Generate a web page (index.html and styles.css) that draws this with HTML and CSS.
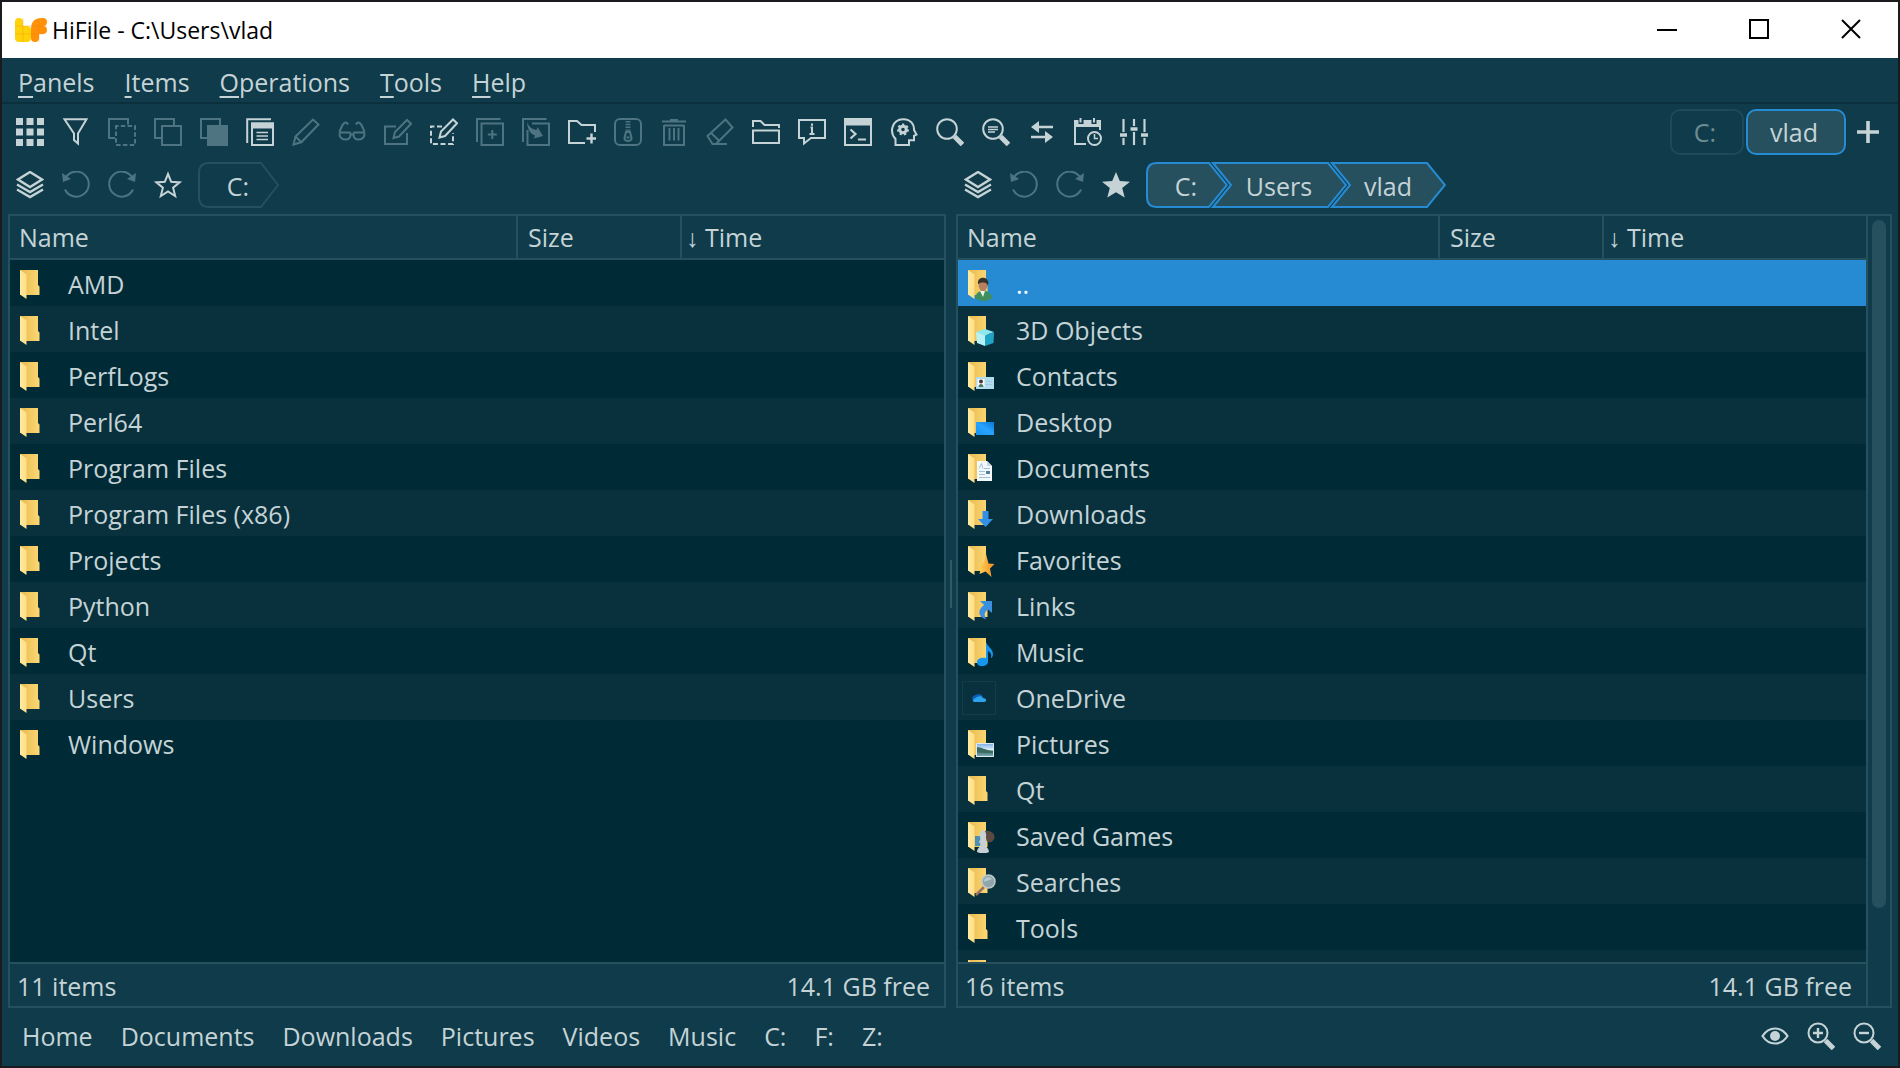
FILE: index.html
```
<!DOCTYPE html>
<html lang="en">
<head>
    <meta charset="UTF-8">
    <meta name="viewport" content="width=device-width, initial-scale=1.0">
    <title>HiFile - C:\Users\vlad</title>
    <link rel="stylesheet" href="styles.css">
</head>
<body>
    <svg class="sprite" aria-hidden="true">
        <defs>
            <linearGradient id="front" x1="0" x2="1"><stop offset="0" stop-color="#ffe9a2"/><stop offset="1" stop-color="#ffdf85"/></linearGradient>
            <linearGradient id="back" x1="0" x2="1"><stop offset="0" stop-color="#e8b950"/><stop offset="1" stop-color="#fcd873"/></linearGradient>
            <linearGradient id="sky" x1="0" y1="0" x2="0" y2="1"><stop offset="0" stop-color="#6fa6e4"/><stop offset=".5" stop-color="#e4f1fb"/><stop offset=".6" stop-color="#3f6d66"/><stop offset="1" stop-color="#8cb9cb"/></linearGradient>
            <linearGradient id="screen" x1="0" y1="1" x2="1" y2="0"><stop offset="0" stop-color="#1594f3"/><stop offset=".5" stop-color="#2aa3ff"/><stop offset="1" stop-color="#0878d8"/></linearGradient>
            <linearGradient id="flame" x1="0" x2="1"><stop offset="0" stop-color="#ffd45c"/><stop offset="1" stop-color="#f28a1c"/></linearGradient>
        </defs>

        <!-- toolbar -->
        <symbol id="i-grid" viewBox="0 0 28 28"><path fill="currentColor" stroke="none" d="M0 0h7v7H0zM10.500 0h7v7h-7zM21 0h7v7h-7zM0 10.500h7v7H0zM10.500 10.500h7v7h-7zM21 10.500h7v7h-7zM0 21h7v7H0zM10.500 21h7v7h-7zM21 21h7v7h-7z"/></symbol>
        <symbol id="i-filter" viewBox="0 0 28 28"><path d="M2.500 1.200h22L16 15.500V25.500l-4-3.500v-6.500z"/></symbol>
        <symbol id="i-unselect" viewBox="0 0 28 28"><path d="M7 20H1V1h19v5.500"/><path d="M8 8h19v19H8z" stroke-dasharray="4.500 2.300" stroke-dashoffset="2"/></symbol>
        <symbol id="i-select" viewBox="0 0 28 28"><path d="M7 20H1V1h19v6M8 8h19v19H8z"/></symbol>
        <symbol id="i-invert" viewBox="0 0 28 28"><path d="M7 20H1V1h19v6"/><path fill="currentColor" d="M8 8h19v19H8z"/></symbol>
        <symbol id="i-windows" viewBox="0 0 28 28"><path d="M1.200 25V1.200H25M6 5.500h21V27H6z"/><path fill="currentColor" stroke="none" d="M5 4.500h23v6H5z"/><path stroke-width="1.500" d="M10.500 14.500H22M10.500 18H22M10.500 21.500H22"/></symbol>
        <symbol id="i-pencil" viewBox="0 0 28 28"><path d="M1.500 26.500l2-8L21 1.500l5.500 5L9.300 24.300zM3.500 18.500l5.800 5.800"/></symbol>
        <symbol id="i-glasses" viewBox="0 0 28 28"><path d="M2 14.500h9.500c1 0 1 .8 1 2 0 3-2 5-5 5s-6-2-6-5zM26 14.500h-9.500c-1 0-1 .8-1 2 0 3 2 5 5 5s6-2 6-5zM1.500 14C3.500 9 5 4 8 4.500c1 .2 1.500 1 2 2M26.500 14c-2-5-3.500-10-6.500-9.500-1 .2-1.500 1-2 2M12 16.500h4"/></symbol>
        <symbol id="i-edit" viewBox="0 0 28 28"><path d="M12 8.500H1V26h22V15M9.500 20l1.500-6L23 2l4 3.800L15 18.500z"/></symbol>
        <symbol id="i-editsel" viewBox="0 0 28 28"><path stroke-dasharray="5 2.600" d="M12 8.500H1V26h22V15"/><path d="M9.500 19.500l1.500-6L23 1.500l4 3.800L15 18z"/></symbol>
        <symbol id="i-copy" viewBox="0 0 28 28"><path d="M1 24V1h23.500M5.500 5.500H27V27H5.500zM16.300 12v9M11.800 16.500h9"/></symbol>
        <symbol id="i-move" viewBox="0 0 28 28"><path d="M1 24V1h23.500M5.500 12v15H27V5.500H10"/><path fill="currentColor" stroke="none" d="M5 4c1.500 4.500 4.500 7 9.500 8l1-3L21 18l-9 2.500 1-3C8 16 5.500 11 5 4z"/></symbol>
        <symbol id="i-newfolder" viewBox="0 0 28 28"><path d="M17 25H1V3h8l4.500 4H27v7"/><path stroke-width="2.400" d="M23.500 15.500v10M18.500 20.500h9.500"/></symbol>
        <symbol id="i-zip" viewBox="0 0 28 28"><rect x="1" y="1" width="26" height="26" rx="5"/><path stroke-dasharray="1.400 1.400" stroke-width="5" d="M14 3v10"/><path d="M12 14h4l1.500 6c.5 4-7.500 4-7 0zM12.500 19.500h3"/></symbol>
        <symbol id="i-trash" viewBox="0 0 28 28"><path d="M2 3.500h24M10 2h8M4 7v20h20V7M4 7.500h20M9.500 10v12.500M14 10v12.500M18.500 10v12.500"/></symbol>
        <symbol id="i-eraser" viewBox="0 0 28 28"><path d="M1.500 18L19.500 1.500l7 8L10 26H6.500zM5 15l8.500 8M8 26h13"/></symbol>
        <symbol id="i-folders" viewBox="0 0 28 28"><path d="M1 9V3h7.500l4 4H27v3M1 12.500h26V25H1z"/></symbol>
        <symbol id="i-info" viewBox="0 0 28 28"><path d="M1 2h26v18H13l-7 5.500V20H1z"/><path d="M12.500 9.500H14V16M11.500 16h5M14 5.500v2.200"/></symbol>
        <symbol id="i-terminal" viewBox="0 0 28 28"><path d="M1 1h26v26H1z"/><path fill="currentColor" stroke="none" d="M0 0h28v7.500H0z"/><path stroke-width="2.200" d="M6.500 11.500l5 4.500-5 4.500M14 21.500h8"/></symbol>
        <symbol id="i-head" viewBox="0 0 28 28"><path d="M5.500 27v-6C-1 14 2 1.500 13 1.200 21 1 24.500 7 24 12l2.500 4.500-2.500 1.300v4.500h-5V27z"/><circle cx="13" cy="11.500" r="3.300" stroke-width="3"/><path stroke-dasharray="2.200 2.200" stroke-width="2" d="M18 11.500a5 5 0 1 1-10 0a5 5 0 1 1 10 0"/></symbol>
        <symbol id="i-search" viewBox="0 0 28 28"><circle cx="11" cy="11" r="9.800"/><path stroke-width="5" d="M18.500 18.500l8 8"/></symbol>
        <symbol id="i-searchtext" viewBox="0 0 28 28"><circle cx="11" cy="11" r="9.800"/><path stroke-width="5" d="M18.500 18.500l8 8"/><path stroke-width="1.500" d="M6 9h10M6 11.500h10M6 14h7"/></symbol>
        <symbol id="i-swap" viewBox="0 0 28 28"><path stroke-width="2.400" d="M8 9h17M3 19h15"/><path fill="currentColor" stroke="none" d="M3 9l8-6v12zM25 19l-8-6v12z"/></symbol>
        <symbol id="i-calendar" viewBox="0 0 28 28"><path d="M12 26H1V3h25v9"/><path fill="currentColor" stroke="none" d="M0 2h27v7H0z"/><path class="cut" d="M7 0v6M20 0v6"/><path stroke-width="2" d="M6.500 0v4.500M20 0v4.500"/><circle cx="20.500" cy="20.500" r="6.500"/><path stroke-width="1.500" d="M20.500 16v4.500H24"/></symbol>
        <symbol id="i-sliders" viewBox="0 0 28 28"><path stroke-width="2.200" d="M3.500 1v13M3.500 20v7M14 1v7M14 14v13M24.500 1v13M24.500 20v7"/><path stroke-width="3.600" d="M0 17h7M10.500 11h7M21 17h7"/></symbol>
        <symbol id="i-plus" viewBox="0 0 28 28"><path stroke-width="3.600" d="M14 3v22M3 14h22"/></symbol>

        <!-- path bar -->
        <symbol id="i-layers" viewBox="0 0 28 28"><path stroke-width="2.400" d="M14 1L26 8.500 14 16 2 8.500zM1 13.500L14 21l13-7.500M1 18.500L14 26l13-7.500"/></symbol>
        <symbol id="i-undo" viewBox="0 0 28 28"><path d="M4 6A12.500 12.500 0 1 1 3 18.500"/><path fill="currentColor" stroke="none" d="M0 2l1 9 8-3z"/></symbol>
        <symbol id="i-redo" viewBox="0 0 28 28"><path d="M24 6A12.500 12.500 0 1 0 25 18.500"/><path fill="currentColor" stroke="none" d="M28 2l-1 9-8-3z"/></symbol>
        <symbol id="i-star" viewBox="0 0 28 28"><path d="M14 3l3.200 7.800 8.300.6-6.400 5.300 2.100 8.300-7.200-4.600L6.800 25l2.100-8.300-6.400-5.300 8.300-.6z"/></symbol>
        <symbol id="i-starfull" viewBox="0 0 28 28"><path fill="currentColor" stroke="none" d="M14 1l3.800 9 10.200.7-7.800 6.400L22.700 26.500 14 21.200 5.300 26.500l2.500-9.400L0 10.700l10.200-.7z"/></symbol>

        <!-- bottom bar -->
        <symbol id="i-eye" viewBox="0 0 28 28"><path stroke-width="2.200" d="M1.500 14C8 4 20 4 26.500 14 20 24 8 24 1.500 14z"/><circle cx="14" cy="14" r="5" fill="currentColor" stroke="none"/></symbol>
        <symbol id="i-zoomin" viewBox="0 0 28 28"><circle cx="11" cy="11" r="9.500"/><path stroke-width="5" d="M18.500 18.500l8 8"/><path stroke-width="2.400" d="M11 6v10M6 11h10"/></symbol>
        <symbol id="i-zoomout" viewBox="0 0 28 28"><circle cx="11" cy="11" r="9.500"/><path stroke-width="5" d="M18.500 18.500l8 8"/><path stroke-width="2.400" d="M6 11h10"/></symbol>

        <!-- file icons -->
        <symbol id="f-folder" viewBox="0 0 34 34"><path fill="url(#back)" d="M6 3h18v15l1.500 1.500V28H6z"/><path fill="url(#front)" d="M6 3l6.500 4.500v24.500L6 27.500z"/></symbol>
        <symbol id="f-user" viewBox="0 0 34 34"><use href="#f-folder"/><path fill="#3f8f5d" d="M13 31c1-5 4-7 8-8 5 1 9 4 9 8-4 4-12 4-17 0z"/><path fill="#eef2ee" d="M18 24l3 6 2-6z"/><ellipse cx="21" cy="18" rx="4.500" ry="6" fill="#b98060"/><path fill="#38332e" d="M16 17c-1-8 10-8 10.500-1l-1 2.500c-.5-3-4-4-9.500-1.500z"/></symbol>
        <symbol id="f-cube" viewBox="0 0 34 34"><use href="#f-folder"/><path fill="#8be7f0" d="M14 19l9-3 9 3-9 3.500z"/><path fill="#b5f3f6" d="M14 19l9 3.500V33l-8-3z"/><path fill="#21a5c6" d="M32 19l-9 3.500V33l8.500-3z"/></symbol>
        <symbol id="f-card" viewBox="0 0 34 34"><use href="#f-folder"/><path fill="#b4dcef" d="M14 18h18v12H14z"/><path fill="#f4f9fb" d="M15.500 20h7v8h-7z"/><path fill="#4b7961" d="M16.500 28c0-4 5-4 5 0z"/><circle cx="19" cy="22.500" r="2" fill="#4b3c31"/><path stroke="#9acbe2" d="M24 22.500h6M24 25.500h6"/></symbol>
        <symbol id="f-desktop" viewBox="0 0 34 34"><use href="#f-folder"/><path fill="url(#screen)" d="M14 17h18v13H14z"/></symbol>
        <symbol id="f-document" viewBox="0 0 34 34"><use href="#f-folder"/><path fill="#f5f8fa" d="M15 10h10l5 5v15H15z"/><path fill="#cdd8de" d="M25 10v5h5z"/><path stroke="#9fc2d8" d="M17 17.500l2.500-5 1.500 5M22 17.500h6M17 20.500h6M17 23.500h6M17 26.500h11"/><path fill="#52809b" d="M24 20h4v3h-4z"/></symbol>
        <symbol id="f-download" viewBox="0 0 34 34"><use href="#f-folder"/><path fill="#3291e6" d="M20.500 14h6v8H31l-7.500 8-7.500-8h4.500z"/></symbol>
        <symbol id="f-favorite" viewBox="0 0 34 34"><use href="#f-folder"/><path fill="url(#flame)" d="M24 11l2.500 9.500 6 .5-4.500 4.500 1.500 8.500-6-5.500-6 2.500 1.500-6-2-4 5-1z"/></symbol>
        <symbol id="f-link" viewBox="0 0 34 34"><use href="#f-folder"/><path fill="#3b90df" d="M18 12h12v12l-4-3.500c-3 2-4 4-3 7l1 3c-8-3-9-9-2-14.500z"/></symbol>
        <symbol id="f-music" viewBox="0 0 34 34"><use href="#f-folder"/><path fill="#1696ee" d="M24 7c1 4 7 7 7 12 0 2-1 4-2 4 1-4-1-6-3-7v10c0 3-2 5-6 5s-5-2-5-4c0-3 4-5 9-4z"/></symbol>
        <symbol id="f-onedrive" viewBox="0 0 34 34"><path fill="none" stroke="#0f3d4c" d="M.5.500h33v33H.5z"/><path fill="#0a5fb4" d="M10 18c0-3 3-4 4-4 2-2 6-1 7 2l-6 4z"/><path fill="#2ba4ed" d="M12 21c-2-1-1-3 1-3.500 3-3 7-3 8-.5 4 0 4 4 1 4z"/></symbol>
        <symbol id="f-picture" viewBox="0 0 34 34"><use href="#f-folder"/><path fill="url(#sky)" d="M14 16h18v14H14z"/><path fill="#3b6a60" d="M15 20c4 0 8 3 16 4v2c-6 0-10 0-16-1z"/><path stroke="#dfe9ee" d="M14.500 16.500h17v13h-17z"/></symbol>
        <symbol id="f-games" viewBox="0 0 34 34"><use href="#f-folder"/><path fill="#4e8fb5" d="M13 17h6v10h-6z"/><path fill="#5b4a42" d="M23 12c5-1 10 2 9.500 7-2 5-5 5-8 3z"/><path fill="#c7d0d4" d="M15 33c0-4 3-4 3.500-8l-1.500-2 1.500-3c-1.500-4-.5-8 2.500-9 3 1 4 5 2.500 9l1.500 3-1.500 2c.5 4 3.500 4 3.500 8-4 2-8 2-12 0z"/></symbol>
        <symbol id="f-search" viewBox="0 0 34 34"><use href="#f-folder"/><path stroke="#9b7360" stroke-width="2.500" d="M14 30l8-8"/><circle cx="26.500" cy="16.500" r="6.500" fill="#8fa6ad" stroke="#bdc8cb" stroke-width="1.500"/><path fill="#b9cacf" d="M22 17c0-5 5-6 8-3z"/></symbol>
    </svg>

    <div class="window">
        <header class="titlebar">
            <svg class="logo" viewBox="0 0 32 24" aria-hidden="true">
                <path class="logo-h" d="M4 4v16h8v-8H4"/>
                <path class="logo-f" d="M20 20v-9q0-7 7-7h1M20 12h8"/>
                <path class="logo-grid" d="M0 8h32M0 16h28M8 0v24M24 0v24"/>
            </svg>
            <h1 class="title">HiFile - C:\Users\vlad</h1>
            <div class="window-buttons">
                <button aria-label="Minimize"><svg viewBox="0 0 20 20"><path d="M0 11h20"/></svg></button>
                <button aria-label="Maximize"><svg viewBox="0 0 20 20"><path d="M1 1h18v18H1z"/></svg></button>
                <button aria-label="Close"><svg viewBox="0 0 20 20"><path d="M1 1l18 18M19 1L1 19"/></svg></button>
            </div>
        </header>

        <nav class="menu">
            <button><u>P</u>anels</button>
            <button><u>I</u>tems</button>
            <button><u>O</u>perations</button>
            <button><u>T</u>ools</button>
            <button><u>H</u>elp</button>
        </nav>

        <div class="toolbar">
            <div class="icons">
                <button class="icon" aria-label="View mode"><svg><use href="#i-grid"/></svg></button>
                <button class="icon" aria-label="Filter"><svg><use href="#i-filter"/></svg></button>
                <button class="icon" aria-label="Unselect" disabled><svg><use href="#i-unselect"/></svg></button>
                <button class="icon" aria-label="Select" disabled><svg><use href="#i-select"/></svg></button>
                <button class="icon" aria-label="Invert selection" disabled><svg><use href="#i-invert"/></svg></button>
                <button class="icon" aria-label="Details"><svg><use href="#i-windows"/></svg></button>
                <button class="icon" aria-label="Edit" disabled><svg><use href="#i-pencil"/></svg></button>
                <button class="icon" aria-label="View" disabled><svg><use href="#i-glasses"/></svg></button>
                <button class="icon" aria-label="Rename" disabled><svg><use href="#i-edit"/></svg></button>
                <button class="icon" aria-label="Batch rename"><svg><use href="#i-editsel"/></svg></button>
                <button class="icon" aria-label="Copy" disabled><svg><use href="#i-copy"/></svg></button>
                <button class="icon" aria-label="Move" disabled><svg><use href="#i-move"/></svg></button>
                <button class="icon" aria-label="New folder"><svg><use href="#i-newfolder"/></svg></button>
                <button class="icon" aria-label="Pack" disabled><svg><use href="#i-zip"/></svg></button>
                <button class="icon" aria-label="Delete" disabled><svg><use href="#i-trash"/></svg></button>
                <button class="icon" aria-label="Wipe" disabled><svg><use href="#i-eraser"/></svg></button>
                <button class="icon" aria-label="Open folder"><svg><use href="#i-folders"/></svg></button>
                <button class="icon" aria-label="Properties"><svg><use href="#i-info"/></svg></button>
                <button class="icon" aria-label="Terminal"><svg><use href="#i-terminal"/></svg></button>
                <button class="icon" aria-label="Commands"><svg><use href="#i-head"/></svg></button>
                <button class="icon" aria-label="Search"><svg><use href="#i-search"/></svg></button>
                <button class="icon" aria-label="Search text"><svg><use href="#i-searchtext"/></svg></button>
                <button class="icon" aria-label="Swap panels"><svg><use href="#i-swap"/></svg></button>
                <button class="icon" aria-label="History"><svg><use href="#i-calendar"/></svg></button>
                <button class="icon" aria-label="Settings"><svg><use href="#i-sliders"/></svg></button>
            </div>
            <div class="tabs">
                <button class="tab">C:</button>
                <button class="tab active">vlad</button>
                <button class="icon add" aria-label="New tab"><svg><use href="#i-plus"/></svg></button>
            </div>
        </div>

        <main class="panels">
            <section class="panel">
                <div class="pathbar">
                    <div class="icons">
                        <button class="icon" aria-label="Places"><svg><use href="#i-layers"/></svg></button>
                        <button class="icon" aria-label="Back" disabled><svg><use href="#i-undo"/></svg></button>
                        <button class="icon" aria-label="Forward" disabled><svg><use href="#i-redo"/></svg></button>
                        <button class="icon" aria-label="Add bookmark"><svg><use href="#i-star"/></svg></button>
                    </div>
                    <nav class="crumbs">
                        <a href="#" class="crumb short"><svg viewBox="0 0 82 46"><path d="M11 1h52l17 22-17 22H11Q1 45 1 35V11Q1 1 11 1z"/></svg><span>C:</span></a>
                    </nav>
                </div>
                <div class="frame">
                    <div class="content">
                        <div class="list">
                            <table>
                                <colgroup><col><col class="col-size"><col class="col-time"></colgroup>
                                <thead><tr><th>Name</th><th>Size</th><th class="sorted">↓ Time</th></tr></thead>
                                <tbody>
                                    <tr><td colspan="3"><div class="item"><svg><use href="#f-folder"/></svg>AMD</div></td></tr>
                                    <tr><td colspan="3"><div class="item"><svg><use href="#f-folder"/></svg>Intel</div></td></tr>
                                    <tr><td colspan="3"><div class="item"><svg><use href="#f-folder"/></svg>PerfLogs</div></td></tr>
                                    <tr><td colspan="3"><div class="item"><svg><use href="#f-folder"/></svg>Perl64</div></td></tr>
                                    <tr><td colspan="3"><div class="item"><svg><use href="#f-folder"/></svg>Program Files</div></td></tr>
                                    <tr><td colspan="3"><div class="item"><svg><use href="#f-folder"/></svg>Program Files (x86)</div></td></tr>
                                    <tr><td colspan="3"><div class="item"><svg><use href="#f-folder"/></svg>Projects</div></td></tr>
                                    <tr><td colspan="3"><div class="item"><svg><use href="#f-folder"/></svg>Python</div></td></tr>
                                    <tr><td colspan="3"><div class="item"><svg><use href="#f-folder"/></svg>Qt</div></td></tr>
                                    <tr><td colspan="3"><div class="item"><svg><use href="#f-folder"/></svg>Users</div></td></tr>
                                    <tr><td colspan="3"><div class="item"><svg><use href="#f-folder"/></svg>Windows</div></td></tr>
                                </tbody>
                            </table>
                        </div>
                        <footer class="status"><span>11 items</span><span>14.1 GB free</span></footer>
                    </div>
                </div>
            </section>

            <div class="splitter"></div>

            <section class="panel">
                <div class="pathbar">
                    <div class="icons">
                        <button class="icon" aria-label="Places"><svg><use href="#i-layers"/></svg></button>
                        <button class="icon" aria-label="Back" disabled><svg><use href="#i-undo"/></svg></button>
                        <button class="icon" aria-label="Forward" disabled><svg><use href="#i-redo"/></svg></button>
                        <button class="icon" aria-label="Remove bookmark"><svg><use href="#i-starfull"/></svg></button>
                    </div>
                    <nav class="crumbs active">
                        <a href="#" class="crumb short"><svg viewBox="0 0 82 46"><path d="M11 1h52l18 22-18 22H11Q1 45 1 35V11Q1 1 11 1z"/></svg><span>C:</span></a>
                        <a href="#" class="crumb long"><svg viewBox="0 0 136 46"><path d="M2 1h115l18 22-18 22H2l18-22z"/></svg><span>Users</span></a>
                        <a href="#" class="crumb mid"><svg viewBox="0 0 116 46"><path d="M2 1h95l18 22-18 22H2l18-22z"/></svg><span>vlad</span></a>
                    </nav>
                </div>
                <div class="frame">
                    <div class="content">
                        <div class="list">
                            <table>
                                <colgroup><col><col class="col-size"><col class="col-time"></colgroup>
                                <thead><tr><th>Name</th><th>Size</th><th class="sorted">↓ Time</th></tr></thead>
                                <tbody>
                                    <tr class="current"><td colspan="3"><div class="item"><svg><use href="#f-user"/></svg>..</div></td></tr>
                                    <tr><td colspan="3"><div class="item"><svg><use href="#f-cube"/></svg>3D Objects</div></td></tr>
                                    <tr><td colspan="3"><div class="item"><svg><use href="#f-card"/></svg>Contacts</div></td></tr>
                                    <tr><td colspan="3"><div class="item"><svg><use href="#f-desktop"/></svg>Desktop</div></td></tr>
                                    <tr><td colspan="3"><div class="item"><svg><use href="#f-document"/></svg>Documents</div></td></tr>
                                    <tr><td colspan="3"><div class="item"><svg><use href="#f-download"/></svg>Downloads</div></td></tr>
                                    <tr><td colspan="3"><div class="item"><svg><use href="#f-favorite"/></svg>Favorites</div></td></tr>
                                    <tr><td colspan="3"><div class="item"><svg><use href="#f-link"/></svg>Links</div></td></tr>
                                    <tr><td colspan="3"><div class="item"><svg><use href="#f-music"/></svg>Music</div></td></tr>
                                    <tr><td colspan="3"><div class="item"><svg><use href="#f-onedrive"/></svg>OneDrive</div></td></tr>
                                    <tr><td colspan="3"><div class="item"><svg><use href="#f-picture"/></svg>Pictures</div></td></tr>
                                    <tr><td colspan="3"><div class="item"><svg><use href="#f-folder"/></svg>Qt</div></td></tr>
                                    <tr><td colspan="3"><div class="item"><svg><use href="#f-games"/></svg>Saved Games</div></td></tr>
                                    <tr><td colspan="3"><div class="item"><svg><use href="#f-search"/></svg>Searches</div></td></tr>
                                    <tr><td colspan="3"><div class="item"><svg><use href="#f-folder"/></svg>Tools</div></td></tr>
                                    <tr><td colspan="3"><div class="item"><svg><use href="#f-folder"/></svg></div></td></tr>
                                </tbody>
                            </table>
                        </div>
                        <footer class="status"><span>16 items</span><span>14.1 GB free</span></footer>
                    </div>
                    <div class="scrollbar"><div class="thumb"></div></div>
                </div>
            </section>
        </main>

        <footer class="bottombar">
            <nav class="places">
                <a href="#">Home</a>
                <a href="#">Documents</a>
                <a href="#">Downloads</a>
                <a href="#">Pictures</a>
                <a href="#">Videos</a>
                <a href="#">Music</a>
                <a href="#">C:</a>
                <a href="#">F:</a>
                <a href="#">Z:</a>
            </nav>
            <div class="icons">
                <button class="icon" aria-label="Hidden files"><svg><use href="#i-eye"/></svg></button>
                <button class="icon" aria-label="Zoom in"><svg><use href="#i-zoomin"/></svg></button>
                <button class="icon" aria-label="Zoom out"><svg><use href="#i-zoomout"/></svg></button>
            </div>
        </footer>
    </div>
</body>
</html>
```
FILE: styles.css
```
:root {
    --bg: #0f3b4a;
    --list: #002b36;
    --list-alt: #08313d;
    --line: #26505e;
    --text: #c5d3d6;
    --dim: #4d7480;
    --accent: #268bd2;
}

* {
    margin: 0;
    padding: 0;
    box-sizing: border-box;
}

body {
    font-family: "Open Sans", "Noto Sans", sans-serif;
    font-size: 25px;
    line-height: 34px;
    color: var(--text);
    background-color: var(--bg);
    overflow: hidden;
}

button {
    font: inherit;
    color: inherit;
    background: none;
    border: none;
}

a {
    color: inherit;
    text-decoration: none;
}

.sprite {
    position: absolute;
    width: 0;
    height: 0;
}

.window {
    display: flex;
    flex-direction: column;
    height: 100vh;
    border: 2px solid #191b1e;
}

/* title bar */
.titlebar {
    display: flex;
    align-items: center;
    height: 56px;
    padding-left: 13px;
    background-color: #fff;
    color: #000;
}

.logo {
    width: 32px;
    height: 24px;
    margin-right: 5px;
    fill: none;
    stroke-width: 8;
    stroke-linecap: round;
    stroke-linejoin: round;
}

.logo-h {
    stroke: #ffd20a;
}

.logo-f {
    stroke: #ff9208;
}

.logo-grid {
    stroke: #f07c00;
    stroke-width: 1;
    opacity: 0.25;
}

.title {
    font-size: 23px;
    font-weight: 400;
}

.window-buttons {
    display: flex;
    align-self: stretch;
    margin-left: auto;
    padding-right: 1px;
}

.window-buttons button {
    width: 92px;
    padding-bottom: 2px;
}

.window-buttons svg {
    display: block;
    width: 20px;
    height: 20px;
    margin: auto;
    fill: none;
    stroke: #000;
    stroke-width: 2;
}

/* menu */
.menu {
    display: flex;
    align-items: center;
    gap: 30px;
    height: 46px;
    padding: 4px 0 0 16px;
    border-bottom: 2px solid #0a303d;
}

.menu u {
    text-decoration-thickness: 2px;
    text-underline-offset: 4px;
}

/* toolbar */
.toolbar {
    display: flex;
    align-items: center;
    justify-content: space-between;
    height: 56px;
    padding: 0 16px 0 14px;
}

.icons {
    display: flex;
    gap: 18px;
}

.icon {
    width: 28px;
    height: 28px;
}

.icon svg {
    display: block;
    width: 28px;
    height: 28px;
    fill: none;
    stroke: currentColor;
    stroke-width: 2;
}

.icon:disabled {
    color: var(--dim);
}

.cut {
    stroke: var(--bg);
    stroke-width: 5;
}

.tabs {
    display: flex;
    align-items: center;
    gap: 2px;
}

.tab {
    width: 74px;
    height: 46px;
    padding-right: 4px;
    border: 2px solid #1f4957;
    border-radius: 10px;
    color: #6c8b95;
}

.tab.active {
    width: 100px;
    border-color: var(--accent);
    background-color: var(--line);
    color: var(--text);
}

.tabs .add {
    margin-left: 6px;
}

/* panels */
.panels {
    flex: 1;
    display: grid;
    grid-template-columns: calc(50% - 4px) 10px minmax(0, 1fr);
    min-height: 0;
    padding: 0 6px;
}

.panel {
    display: flex;
    flex-direction: column;
    min-height: 0;
}

.pathbar {
    display: flex;
    align-items: center;
    gap: 16px;
    height: 50px;
    margin-bottom: 4px;
    padding-left: 8px;
}

.crumbs {
    display: flex;
}

.crumb {
    position: relative;
    height: 46px;
    padding: 1px 2px 0 0;
    line-height: 46px;
    text-align: center;
}

.crumb + .crumb {
    margin-left: -17px;
    padding-right: 0;
}

.crumb svg {
    position: absolute;
    top: 0;
    left: 0;
    width: 100%;
    height: 100%;
    fill: none;
    stroke: var(--line);
    stroke-width: 2;
}

.crumb span {
    position: relative;
}

.crumbs.active svg {
    fill: var(--line);
    stroke: var(--accent);
}

.short {
    width: 82px;
}

.mid {
    width: 116px;
}

.long {
    width: 136px;
}

.frame {
    flex: 1;
    display: flex;
    min-height: 0;
    border: 2px solid var(--line);
}

.content {
    flex: 1;
    display: flex;
    flex-direction: column;
    min-width: 0;
}

.list {
    flex: 1;
    overflow: hidden;
    background-color: var(--list);
}

table {
    width: 100%;
    table-layout: fixed;
    border-collapse: separate;
    border-spacing: 0;
}

.col-size {
    width: 164px;
}

.col-time {
    width: 264px;
}

th {
    height: 44px;
    padding-left: 9px;
    background-color: var(--bg);
    border-bottom: 2px solid var(--line);
    font-weight: 400;
    text-align: left;
}

th + th {
    padding-left: 10px;
    border-left: 2px solid var(--line);
}

th.sorted {
    padding-left: 4px;
}

tbody tr:nth-child(even) {
    background-color: var(--list-alt);
}

tbody tr.current {
    background-color: var(--accent);
    color: #fff;
}

.item {
    display: flex;
    align-items: center;
    gap: 20px;
    height: 46px;
    padding: 1px 0 0 4px;
    line-height: 36px;
}

.item svg {
    width: 34px;
    height: 34px;
    fill: none;
}

.status {
    display: flex;
    align-items: center;
    justify-content: space-between;
    height: 44px;
    padding: 2px 14px 0 7px;
    border-top: 2px solid var(--line);
}

.scrollbar {
    width: 24px;
    padding: 4px;
    border-left: 2px solid var(--line);
}

.thumb {
    width: 14px;
    height: 88%;
    border-radius: 7px;
    background-color: var(--line);
}

.splitter {
    align-self: center;
    justify-self: center;
    width: 2px;
    height: 48px;
    background-color: #315a68;
}

/* bottom bar */
.bottombar {
    display: flex;
    align-items: center;
    justify-content: space-between;
    height: 58px;
    padding: 0 17px 2px 20px;
}

.places {
    display: flex;
    gap: 28px;
}
```
